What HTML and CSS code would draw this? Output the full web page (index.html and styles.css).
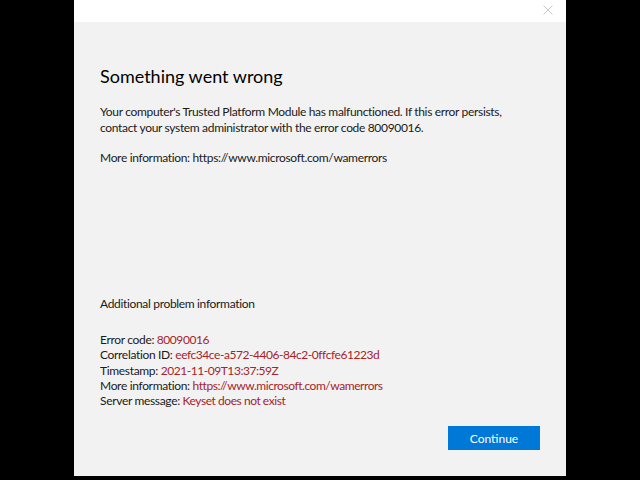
FILE: index.html
```html
<!DOCTYPE html>
<html>
<head>
<meta charset="utf-8">
<link rel="stylesheet" href="styles.css">
</head>
<body>
<div class="screen">
  <div class="dialog">
    <div class="titlebar">
      <svg class="close" width="10" height="10" viewBox="0 0 10 10"><path d="M0.5 0.5 L9.5 9.5 M9.5 0.5 L0.5 9.5" stroke="#c8c8c8" stroke-width="1"/></svg>
    </div>
    <div class="content">
      <h1 class="heading">Something went wrong</h1>
      <p class="text intro">Your computer's Trusted Platform Module has malfunctioned. If this error persists, contact your system administrator with the error code 80090016.</p>
      <p class="text more">More information: https://www.microsoft.com/wamerrors</p>
      <div class="spacer"></div>
      <p class="text add">Additional problem information</p>
      <div class="details">
        <div>Error code: <span class="red">80090016</span></div>
        <div>Correlation ID: <span class="red">eefc34ce-a572-4406-84c2-0ffcfe61223d</span></div>
        <div>Timestamp: <span class="red">2021-11-09T13:37:59Z</span></div>
        <div>More information: <span class="red">https://www.microsoft.com/wamerrors</span></div>
        <div>Server message: <span class="red">Keyset does not exist</span></div>
      </div>
      <div class="actions">
        <button class="btn">Continue</button>
      </div>
    </div>
  </div>
</div>
</body>
</html>
```
FILE: styles.css
```css
html, body { margin: 0; padding: 0; background: #000; }
.screen { width: 640px; height: 480px; display: flex; padding-left: 74px; box-sizing: border-box; }
.dialog { width: 492px; height: 476px; background: #f2f2f2; display: flex; flex-direction: column; font-family: "Lato", sans-serif; color: #1a1a1a; }
.titlebar { height: 22px; background: #fff; display: flex; justify-content: flex-end; align-items: center; padding-right: 13px; }
.close { display: block; margin-top: -2px; }
.content { flex: 1; padding: 0 26px; display: flex; flex-direction: column; }
.heading { font-size: 18px; font-weight: 400; margin: 42px 0 0; line-height: 24px; color: #000; }
.text { font-size: 12px; line-height: 16px; margin: 0; letter-spacing: -0.33px; }
.intro { margin-top: 16px; }
.more { margin-top: 14px; }
.spacer { height: 130px; }
.details { margin-top: 20px; font-size: 12px; line-height: 15.3px; letter-spacing: -0.33px; }
.details .red { letter-spacing: -0.45px; }
.red { color: #a8232a; }
.actions { display: flex; justify-content: flex-end; margin-top: 18px; }
.btn { width: 92px; height: 24px; background: #0078d7; color: #fff; border: 0; font-family: "Lato", sans-serif; font-size: 12px; padding: 0; }
```
